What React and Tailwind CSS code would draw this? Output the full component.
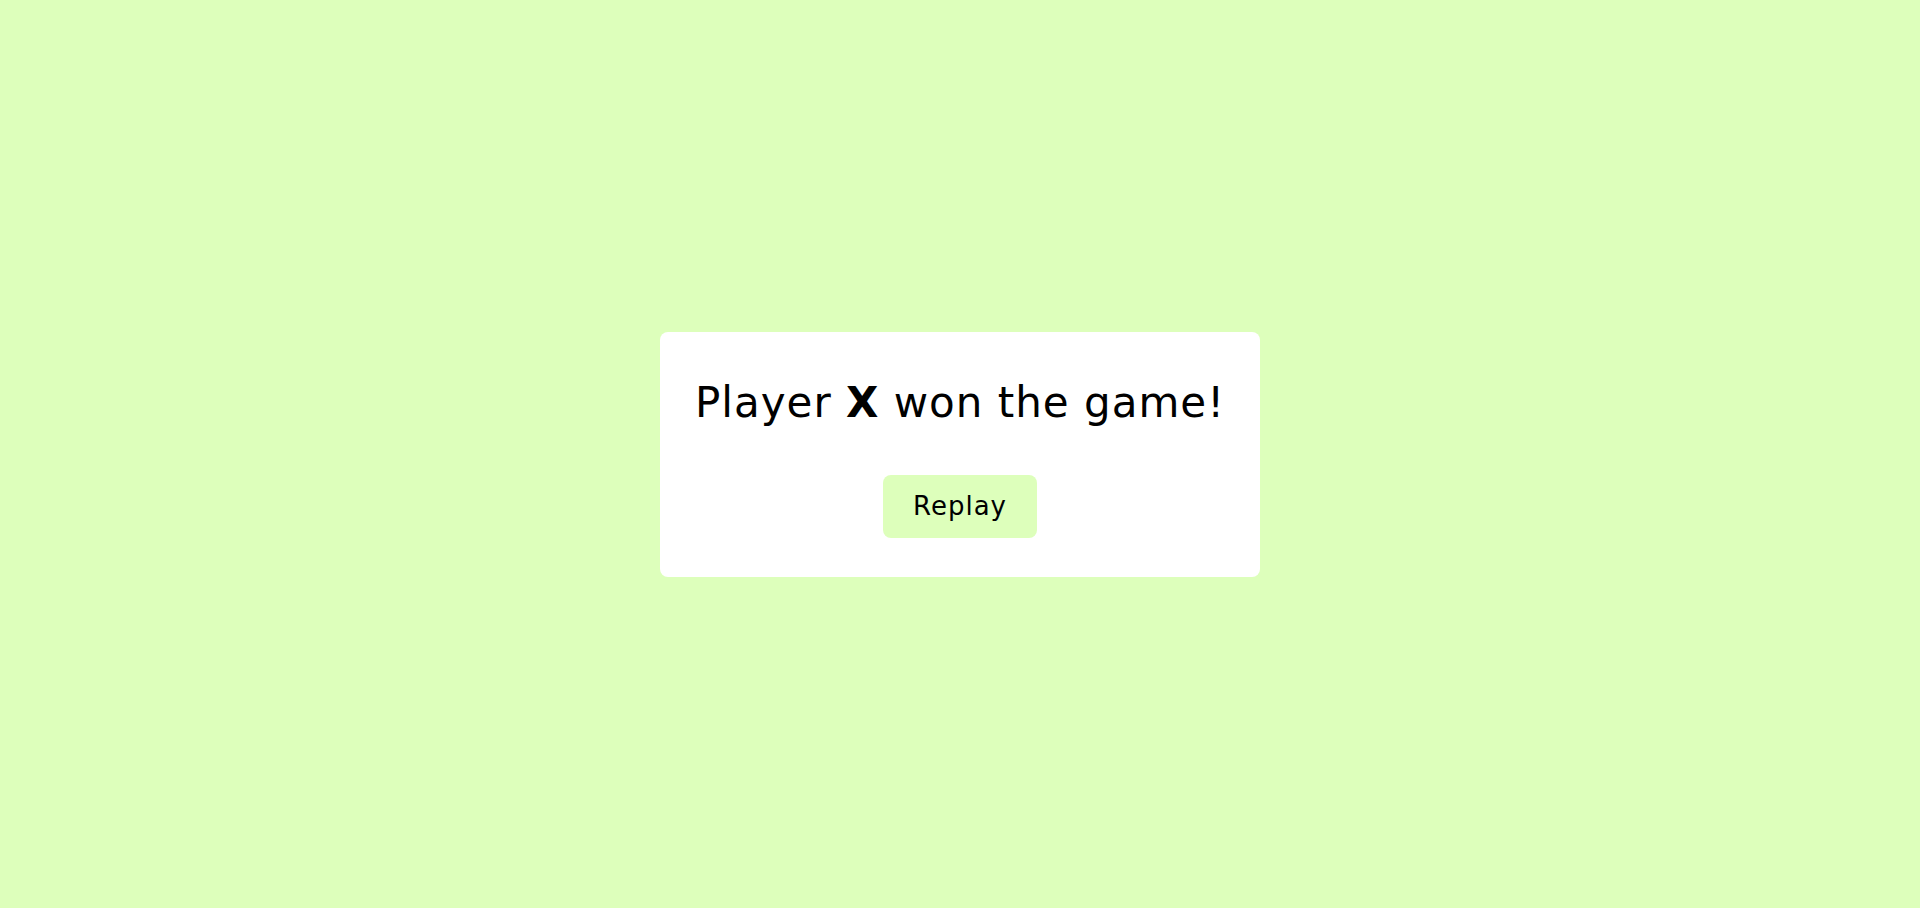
export default function App() {
  return (
    <div className="flex min-h-screen w-full items-center justify-center bg-[#ddffbb] font-['DejaVu_Sans',sans-serif] text-black">
      <div className="flex h-[245px] w-[600px] flex-col items-center rounded-lg bg-white pt-[50px]">
        <h1 className="text-[42px] leading-none font-normal tracking-[1px]">
          Player <span className="font-semibold">X</span> won the game!
        </h1>
        <button className="mt-[51px] flex h-[63px] w-[154px] items-center justify-center rounded-lg bg-[#ddffbb] text-[26px] tracking-[1px]">
          Replay
        </button>
      </div>
    </div>
  );
}
